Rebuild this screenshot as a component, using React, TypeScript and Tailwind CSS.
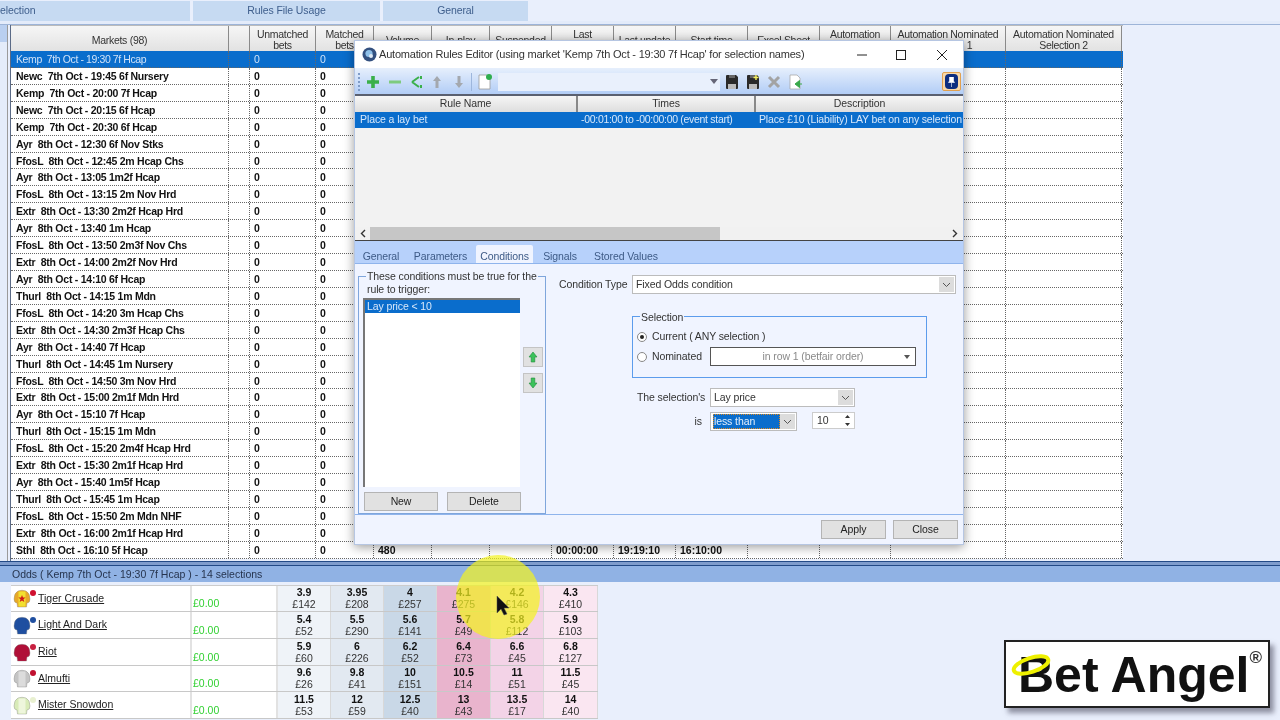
import React from "react";

const markets = [
  "Kemp  7th Oct - 19:30 7f Hcap",
  "Newc  7th Oct - 19:45 6f Nursery",
  "Kemp  7th Oct - 20:00 7f Hcap",
  "Newc  7th Oct - 20:15 6f Hcap",
  "Kemp  7th Oct - 20:30 6f Hcap",
  "Ayr  8th Oct - 12:30 6f Nov Stks",
  "FfosL  8th Oct - 12:45 2m Hcap Chs",
  "Ayr  8th Oct - 13:05 1m2f Hcap",
  "FfosL  8th Oct - 13:15 2m Nov Hrd",
  "Extr  8th Oct - 13:30 2m2f Hcap Hrd",
  "Ayr  8th Oct - 13:40 1m Hcap",
  "FfosL  8th Oct - 13:50 2m3f Nov Chs",
  "Extr  8th Oct - 14:00 2m2f Nov Hrd",
  "Ayr  8th Oct - 14:10 6f Hcap",
  "Thurl  8th Oct - 14:15 1m Mdn",
  "FfosL  8th Oct - 14:20 3m Hcap Chs",
  "Extr  8th Oct - 14:30 2m3f Hcap Chs",
  "Ayr  8th Oct - 14:40 7f Hcap",
  "Thurl  8th Oct - 14:45 1m Nursery",
  "FfosL  8th Oct - 14:50 3m Nov Hrd",
  "Extr  8th Oct - 15:00 2m1f Mdn Hrd",
  "Ayr  8th Oct - 15:10 7f Hcap",
  "Thurl  8th Oct - 15:15 1m Mdn",
  "FfosL  8th Oct - 15:20 2m4f Hcap Hrd",
  "Extr  8th Oct - 15:30 2m1f Hcap Hrd",
  "Ayr  8th Oct - 15:40 1m5f Hcap",
  "Thurl  8th Oct - 15:45 1m Hcap",
  "FfosL  8th Oct - 15:50 2m Mdn NHF",
  "Extr  8th Oct - 16:00 2m1f Hcap Hrd",
  "Sthl  8th Oct - 16:10 5f Hcap",
];

const headers = [
  "Markets (98)", "", "Unmatched bets", "Matched bets", "Volume", "In-play", "Suspended", "Last Suspended",
  "Last update", "Start time", "Excel Sheet", "Automation Rules", "Automation Nominated Selection 1", "Automation Nominated Selection 2",
];

const runners = [
  { name: "Tiger Crusade", height: "h-[26px]", body: "#e8a828", centre: "#f2e030", cap: "#d01030", prices: ["3.9", "3.95", "4", "4.1", "4.2", "4.3"], sizes: ["£142", "£208", "£257", "£275", "£146", "£410"] },
  { name: "Light And Dark", height: "h-[27px]", body: "#1f4fa0", centre: "#1f4fa0", cap: "#1f4fa0", prices: ["5.4", "5.5", "5.6", "5.7", "5.8", "5.9"], sizes: ["£52", "£290", "£141", "£49", "£112", "£103"] },
  { name: "Riot", height: "h-[27px]", body: "#b01038", centre: "#b01038", cap: "#c82040", prices: ["5.9", "6", "6.2", "6.4", "6.6", "6.8"], sizes: ["£60", "£226", "£52", "£73", "£45", "£127"] },
  { name: "Almufti", height: "h-[26px]", body: "#c4c4c4", centre: "#dcdcdc", cap: "#c01030", prices: ["9.6", "9.8", "10", "10.5", "11", "11.5"], sizes: ["£26", "£41", "£151", "£14", "£51", "£45"] },
  { name: "Mister Snowdon", height: "h-[27px]", body: "#d8ebb8", centre: "#eef6dc", cap: "#e8f0d0", prices: ["11.5", "12", "12.5", "13", "13.5", "14"], sizes: ["£53", "£59", "£40", "£43", "£17", "£40"] },
];

const priceBg = ["bg-[#eff3f8]", "bg-[#e2e9f1]", "bg-[#c9d8e7]", "bg-[#e9b4cd]", "bg-[#f3d3e7]", "bg-[#fae6f1]"];

function Silk({ body, centre, cap, star }: { body: string; centre: string; cap: string; star?: boolean }) {
  return (
    <svg width="24" height="19" viewBox="0 0 24 19" className="shrink-0">
      <path d="M5 2Q9 0.500 13 2Q17 4 17 10Q17 14 14 14L13.500 18H4.500L4 14Q1 14 1 10Q1 4 5 2z" fill={body} stroke="#888" strokeWidth="0.4" />
      <rect x="5.500" y="2.500" width="7" height="15" fill={centre} />
      {star && <path d="M9 6l1 2.600 2.600 0-2.100 1.700 0.800 2.700-2.300-1.600-2.300 1.600 0.800-2.700-2.100-1.700 2.600 0z" fill="#d01818" />}
      <circle cx="20" cy="4" r="3" fill={cap} />
    </svg>
  );
}

function HeaderCell({ label }: { label: string }) {
  return (
    <div className="flex items-center justify-center border-r border-b-[3px] border-r-[#8a8a8a] border-b-[#bdbdbd] bg-gradient-to-b from-[#f6f6f6] to-[#e2e2e2] px-0.5 pt-[3px] text-center text-[10.5px] leading-[11px] tracking-[-0.3px] text-[#333]">
      {label}
    </div>
  );
}

function Disk({ plus }: { plus?: boolean }) {
  return (
    <svg width="14" height="16" viewBox="0 0 14 16">
      <path d="M2 1h9l2 2v11a1 1 0 0 1-1 1H2a1 1 0 0 1-1-1V2a1 1 0 0 1 1-1z" fill="#2a2a2a" />
      <rect x="3" y="10" width="8" height="5" fill="#bbb" />
      <rect x="4" y="1" width="6" height="3" fill="#666" />
      {plus && <path d="M10 1v5M7.500 3.500h5" stroke="#f4f060" strokeWidth="1.400" />}
    </svg>
  );
}

function ComboArrow() {
  return (
    <span className="flex h-[15px] w-[15px] items-center justify-center bg-[#dcdcdc]">
      <svg width="9" height="6" viewBox="0 0 9 6"><path d="M1 1l3.500 3.500L8 1" fill="none" stroke="#555" strokeWidth="1" /></svg>
    </span>
  );
}

function Combo({ text, className }: { text: string; className: string }) {
  return (
    <div className={`flex items-center justify-between border border-[#bcbcbc] bg-white pl-[3px] pr-[1px] text-[#333] ${className}`}>
      <span>{text}</span>
      <ComboArrow />
    </div>
  );
}

function GreyButton({ label, className }: { label: string; className: string }) {
  return (
    <div className={`flex items-center justify-center border border-[#b4b4b4] bg-[#e1e1e1] text-[#222] ${className}`}>
      {label}
    </div>
  );
}

function Radio({ on }: { on?: boolean }) {
  return (
    <span className="flex h-[10px] w-[10px] shrink-0 items-center justify-center rounded-full border border-[#888] bg-white">
      {on && <span className="h-[4px] w-[4px] rounded-full bg-[#222]" />}
    </span>
  );
}

function RulesEditor() {
  return (
    <div className="absolute left-[354px] top-[40px] z-10 flex h-[505px] w-[610px] flex-col border border-[#b6c6e2] bg-[#f0f4ff] tracking-[-0.1px] shadow-[0_2px_10px_rgba(0,0,0,0.4)]">
      <div className="flex h-[27px] shrink-0 items-center bg-white pl-[7px] text-[#333]">
        <svg width="15" height="15" viewBox="0 0 15 15" className="mr-[2px] shrink-0">
          <circle cx="7.500" cy="7.500" r="7" fill="#33507f" />
          <circle cx="7" cy="6.500" r="3.600" fill="#8fc0e8" />
          <circle cx="9" cy="9" r="2" fill="#dfeaf5" />
        </svg>
        <span className="whitespace-nowrap text-[11px] tracking-[-0.2px]">Automation Rules Editor (using market 'Kemp 7th Oct - 19:30 7f Hcap' for selection names)</span>
        <div className="ml-auto flex items-center">
          <svg width="12" height="12" viewBox="0 0 12 12" className="mr-[27px]"><path d="M1 6h10" stroke="#222" strokeWidth="1" /></svg>
          <svg width="12" height="12" viewBox="0 0 12 12" className="mr-[29px]"><rect x="1.500" y="1.500" width="9" height="9" fill="none" stroke="#222" strokeWidth="1" /></svg>
          <svg width="12" height="12" viewBox="0 0 12 12" className="mr-[15px]"><path d="M1 1l10 10M11 1L1 11" stroke="#222" strokeWidth="1" /></svg>
        </div>
      </div>

      <div className="flex h-[26px] shrink-0 items-center bg-gradient-to-b from-[#e6effc] to-[#b2cdf6] pl-[3px] pt-[1px]">
        <span className="h-[18px] border-l-2 border-dotted border-[#7f9cc8]" />
        <svg width="16" height="16" viewBox="0 0 16 16" className="ml-[5px]"><path d="M8 2v12M2 8h12" stroke="#3bb04a" strokeWidth="3.600" /></svg>
        <svg width="14" height="16" viewBox="0 0 14 16" className="ml-[7px]"><path d="M1 8h12" stroke="#7ecb7e" strokeWidth="3" /></svg>
        <svg width="14" height="16" viewBox="0 0 14 16" className="ml-[9px]"><path d="M1 8l7-5M1 8l7 5M10 2v3M10 11v3" stroke="#3bb04a" strokeWidth="2" fill="none" /></svg>
        <svg width="10" height="14" viewBox="0 0 10 14" className="ml-[7px]"><path d="M5 1l4 5H6.500v7h-3V6H1z" fill="#a4a8ae" /></svg>
        <svg width="10" height="14" viewBox="0 0 10 14" className="ml-[12px]"><path d="M5 13L1 8h2.500V1h3v7H9z" fill="#a4a8ae" /></svg>
        <span className="ml-[7px] h-[18px] border-l border-[#9db6dc]" />
        <svg width="15" height="17" viewBox="0 0 15 17" className="ml-[6px]"><path d="M1 2h8l3 3v11H1z" fill="#fff" stroke="#999" strokeWidth="0.800" /><circle cx="11" cy="4" r="3" fill="#2fae4e" /></svg>
        <div className="ml-[5px] flex h-[18px] w-[222px] items-center justify-end bg-[#e9f0fc] pr-[2px]">
          <svg width="8" height="5" viewBox="0 0 8 5"><path d="M0 0h8L4 5z" fill="#667" /></svg>
        </div>
        <span className="ml-[5px] flex"><Disk /></span>
        <span className="ml-[7px] flex"><Disk plus /></span>
        <svg width="14" height="14" viewBox="0 0 14 14" className="ml-[7px]"><path d="M2 2l10 10M12 2L2 12" stroke="#a3a3a3" strokeWidth="3" /></svg>
        <svg width="14" height="16" viewBox="0 0 14 16" className="ml-[8px]"><path d="M1 1h7l3 3v11H1z" fill="#fff" stroke="#aaa" strokeWidth="0.800" /><path d="M13 10H8M10.500 6.500L6 10l4.500 3.500z" fill="#39a84a" stroke="#39a84a" /></svg>
        <div className="ml-auto mr-[2px] flex h-[19px] w-[19px] items-center justify-center rounded-[2px] border border-[#e0a050] bg-[#f8d8a8]">
          <span className="flex h-[15px] w-[13px] items-center justify-center rounded-[4px] bg-[#0c2d80]">
            <svg width="7" height="10" viewBox="0 0 7 10"><path d="M1.500 0h4v4l1 1.500H0.500l1-1.500zM3.500 5.500V10" fill="#fff" stroke="#fff" strokeWidth="0.600" /></svg>
          </span>
        </div>
      </div>

      <div className="flex h-[18px] shrink-0 border-t-2 border-[#5a6070] bg-gradient-to-b from-[#f6f6f6] to-[#dedede] text-[#333]">
        <div className="flex w-[223px] shrink-0 items-center justify-center border-r-2 border-[#888]">Rule Name</div>
        <div className="flex w-[178px] shrink-0 items-center justify-center border-r-2 border-[#888]">Times</div>
        <div className="flex flex-1 items-center justify-center">Description</div>
      </div>
      <div className="flex h-[115px] shrink-0 flex-col bg-[#f2f2f2]">
        <div className="flex h-[16px] items-center bg-[#0a6dcc] text-[#d8e8fa]">
          <span className="w-[223px] shrink-0 pl-[5px]">Place a lay bet</span>
          <span className="w-[178px] shrink-0 whitespace-nowrap pl-[3px] tracking-[-0.3px]">-00:01:00 to -00:00:00 (event start)</span>
          <span className="whitespace-nowrap pl-[3px] tracking-[-0.15px]">Place £10 (Liability) LAY bet on any selection</span>
        </div>
      </div>
      <div className="flex h-[14px] shrink-0 items-center border-b border-[#444] bg-[#f1f1f1]">
        <span className="flex w-[15px] justify-center">
          <svg width="6" height="9" viewBox="0 0 6 9"><path d="M5 1L1.500 4.500 5 8" fill="none" stroke="#333" strokeWidth="1.400" /></svg>
        </span>
        <div className="h-full w-[350px] bg-[#c6c6c6]" />
        <span className="ml-auto mr-[4px] flex w-[8px] justify-center">
          <svg width="6" height="9" viewBox="0 0 6 9"><path d="M1 1l3.500 3.500L1 8" fill="none" stroke="#333" strokeWidth="1.400" /></svg>
        </span>
      </div>

      <div className="flex h-[23px] shrink-0 items-end border-b border-[#8fb4ec] bg-[#b7d1fb] pl-[1px] text-[#3d5a86]">
        <span className="flex h-[12px] w-[50px] items-center justify-center">General</span>
        <span className="flex h-[12px] w-[69px] items-center justify-center">Parameters</span>
        <span className="ml-[1px] flex h-[18px] w-[57px] items-center justify-center rounded-t-[2px] bg-[#f0f4ff] pt-[5px]">Conditions</span>
        <span className="flex h-[12px] w-[54px] items-center justify-center">Signals</span>
        <span className="ml-[3px] flex h-[12px] w-[72px] items-center justify-center">Stored Values</span>
      </div>

      <div className="flex h-[251px] shrink-0 border-b border-[#8fb4ec]">
        <div className="relative ml-[3px] mt-[12px] flex h-[238px] w-[188px] shrink-0 flex-col border border-[#7fa6dc] pl-[4px] pt-[4px] text-[#333]">
          <span className="absolute left-[7px] top-[-7px] whitespace-nowrap bg-[#f0f4ff] px-[1px] leading-[13px]">These conditions must be true for the</span>
          <span className="mt-[2px] pl-[4px] leading-[12px]">rule to trigger:</span>
          <div className="mt-[3px] h-[189px] w-[157px] border-l-2 border-t-2 border-[#777] bg-white">
            <div className="flex h-[13px] items-center bg-[#0a6dcc] pl-[2px] text-[#d8e8fa]">Lay price &lt; 10</div>
          </div>
          <div className="ml-[1px] mt-[5px] flex gap-[9px]">
            <GreyButton label="New" className="h-[19px] w-[74px]" />
            <GreyButton label="Delete" className="h-[19px] w-[74px]" />
          </div>
        </div>
        <div className="z-10 ml-[-23px] mt-[83px] flex w-[20px] shrink-0 flex-col gap-[6px]">
          <div className="flex h-[20px] items-center justify-center border border-[#c4c4c4] bg-[#e1e1e1]">
            <svg width="10" height="12" viewBox="0 0 10 12"><path d="M5 1l4 5H6.800v5H3.200V6H1z" fill="#3cc25a" stroke="#1f8a3a" strokeWidth="0.600" /></svg>
          </div>
          <div className="flex h-[20px] items-center justify-center border border-[#c4c4c4] bg-[#e1e1e1]">
            <svg width="10" height="12" viewBox="0 0 10 12"><path d="M5 11L1 6h2.200V1h3.600v5H9z" fill="#3cc25a" stroke="#1f8a3a" strokeWidth="0.600" /></svg>
          </div>
        </div>

        <div className="ml-[16px] flex min-w-0 flex-col text-[#333]">
          <div className="mt-[11px] flex items-center">
            <span className="w-[73px] whitespace-nowrap">Condition Type</span>
            <Combo text="Fixed Odds condition" className="h-[19px] w-[324px]" />
          </div>
          <div className="relative ml-[73px] mt-[22px] flex h-[62px] w-[295px] flex-col border border-[#5c9cec] pl-[4px] pt-[13px]">
            <span className="absolute left-[7px] top-[-6px] bg-[#f0f4ff] px-[1px] leading-[13px]">Selection</span>
            <div className="flex h-[13px] items-center gap-[5px]">
              <Radio on />
              <span>Current ( ANY selection )</span>
            </div>
            <div className="mt-[4px] flex items-center gap-[5px]">
              <Radio />
              <span className="w-[53px]">Nominated</span>
              <div className="relative flex h-[19px] w-[206px] items-center justify-center border border-[#555] bg-white text-[#8a8a8a]">
                in row 1 (betfair order)
                <svg width="6" height="4" viewBox="0 0 6 4" className="absolute right-[5px] top-[7px]"><path d="M0 0h6L3 4z" fill="#555" /></svg>
              </div>
            </div>
          </div>
          <div className="ml-[78px] mt-[10px] flex items-center">
            <span className="w-[73px] whitespace-nowrap">The selection's</span>
            <Combo text="Lay price" className="h-[19px] w-[145px]" />
          </div>
          <div className="ml-[78px] mt-[5px] flex items-start">
            <span className="flex h-[19px] w-[73px] items-center justify-end pr-[8px]">is</span>
            <div className="flex h-[19px] w-[87px] items-center justify-between border border-[#bcbcbc] bg-white pl-[2px] pr-[1px]">
              <span className="flex h-[15px] w-[67px] items-center border border-dotted border-[#e08a20] bg-[#0a6dcc] text-[#e4effb]">less than</span>
              <ComboArrow />
            </div>
            <div className="ml-[15px] flex h-[17px] w-[43px] items-center justify-between border border-[#ccc] bg-white px-[4px]">
              <span>10</span>
              <svg width="5" height="11" viewBox="0 0 5 11"><path d="M0 3l2.500-3L5 3zM0 8h5l-2.500 3z" fill="#333" /></svg>
            </div>
          </div>
        </div>
      </div>

      <div className="flex flex-1 items-start justify-end gap-[7px] pr-[5px] pt-[5px]">
        <GreyButton label="Apply" className="h-[19px] w-[65px]" />
        <GreyButton label="Close" className="h-[19px] w-[65px]" />
      </div>
    </div>
  );
}

function MarketsGrid() {
  return (
    <div className="flex h-[536px] w-[1112px] flex-col overflow-hidden">
      <div className="grid h-[26px] shrink-0 grid-cols-[218px_21px_66px_58px_58px_58px_62px_62px_62px_72px_72px_71px_115px_116px] border-t border-[#bbb]">
        {headers.map((h, i) => (
          <HeaderCell key={i} label={h} />
        ))}
      </div>
      {markets.map((name, i) => {
        const selected = i === 0;
        const last = i === markets.length - 1;
        const cells = last ? ["", "0", "0", "480", "", "", "00:00:00", "19:19:10", "16:10:00", "", "", "", ""] : ["", "0", "0", "", "", "", "", "", "", "", "", "", ""];
        return (
          <div
            key={name}
            className={`grid h-[16.930px] shrink-0 grid-cols-[218px_21px_66px_58px_58px_58px_62px_62px_62px_72px_72px_71px_115px_116px] border-b border-dotted border-[#666] leading-[16px] ${selected ? "bg-[#0a6dcc] font-normal text-[#d0e2f8]" : "bg-white font-bold text-[#111]"}`}
          >
            <div className={`overflow-hidden whitespace-pre border-r border-dotted border-[#666] pl-[5px] ${selected ? "tracking-[-0.4px]" : "tracking-[-0.25px]"}`}>{name}</div>
            {cells.map((c, j) => (
              <div key={j} className="overflow-hidden border-r border-dotted border-[#666] pl-[4px]">{c}</div>
            ))}
          </div>
        );
      })}
    </div>
  );
}

function OddsPanel() {
  return (
    <div className="flex flex-1 flex-col">
      <div className="h-[5px] shrink-0 border-y border-[#234a86] bg-[#7f9ccc]" />
      <div className="flex h-[16px] shrink-0 items-center bg-[#90b2e4] pl-[12px] pt-[1px] text-[#26344e]">Odds ( Kemp  7th Oct - 19:30 7f Hcap ) - 14 selections</div>
      <div className="ml-[11px] mt-[3px] flex w-[587px] flex-col border-t border-[#ccc]">
        {runners.map((r, idx) => (
          <div key={r.name} className={`grid shrink-0 grid-cols-[179px_88px_53px_53px_53px_54px_53px_54px] grid-rows-[minmax(0,1fr)] border-b border-[#c8c8c8] leading-[12px] ${r.height}`}>
            <div className="flex items-center gap-[1px] bg-white pl-[2px] text-[#222]">
              <Silk body={r.body} centre={r.centre} cap={r.cap} star={idx === 0} />
              <span className="mb-[2px] underline">{r.name}</span>
            </div>
            <div className="flex items-end border-x-2 border-[#e2e2e2] bg-white pb-[2px] pl-[1px] text-[#31d031]">£0.00</div>
            {r.prices.map((p, i) => (
              <div key={i} className={`flex flex-col items-center justify-center border-r border-[#d8d8d8] pb-[1px] text-[#111] ${priceBg[i]}`}>
                <span className="font-bold">{p}</span>
                <span className="text-[#333]">{r.sizes[i]}</span>
              </div>
            ))}
          </div>
        ))}
      </div>
    </div>
  );
}

export default function App() {
  return (
    <div className="relative flex h-[720px] w-[1280px] flex-col overflow-hidden bg-[#e9effc] font-['Liberation_Sans',Arial,sans-serif] text-[10.5px] blur-[0.35px]">
      <div className="flex h-[21px] shrink-0 gap-[3px] pt-[1px] tracking-[-0.1px] text-[#3e5e8c]">
        <div className="flex w-[190px] items-center bg-[#c6daf2]">election</div>
        <div className="flex w-[187px] items-center justify-center bg-[#c6daf2]">Rules File Usage</div>
        <div className="flex w-[145px] items-center justify-center bg-[#c6daf2]">General</div>
      </div>
      <div className="h-[3px] shrink-0 bg-[#e3ebfa]" />
      <div className="h-[1px] shrink-0 bg-[#9db4d8]" />
      <div className="flex shrink-0">
        <div className="mr-[2px] h-[536px] w-[8px] border-r border-[#9a9a9a] bg-[#e4ecfa]">
          <div className="h-[17px] bg-[#b9cff0]" />
        </div>
        <div className="w-[1px] bg-[#5a6a86]" />
        <MarketsGrid />
      </div>
      <OddsPanel />

      <RulesEditor />

      <div className="absolute left-[456px] top-[555px] z-20 h-[84px] w-[84px] rounded-full bg-[#f4f41e]/70" />
      <svg width="15" height="20" viewBox="0 0 15 20" className="absolute left-[496px] top-[596px] z-30">
        <path d="M1 0l12 12H8l3 6-3 1-3-6-4 4z" fill="#111" stroke="#555" strokeWidth="0.500" />
      </svg>

      <div className="absolute left-[1004px] top-[640px] z-20 flex h-[68px] w-[266px] items-start border-2 border-[#222] bg-white pl-[12px] font-['Liberation_Sans',sans-serif] shadow-[4px_5px_5px_rgba(70,70,90,0.55)]">
        <span className="mt-[2px] text-[50px] font-bold leading-[62px] text-[#111]">Bet Angel</span>
        <span className="mt-[7px] text-[17px] font-bold leading-[18px] text-[#333]">®</span>
        <svg width="42" height="26" viewBox="0 0 42 26" className="absolute left-[5px] top-[10px]">
          <ellipse cx="20" cy="13" rx="18" ry="7" transform="rotate(-18 20 13)" fill="none" stroke="#eef000" strokeWidth="4" />
        </svg>
      </div>
    </div>
  );
}
